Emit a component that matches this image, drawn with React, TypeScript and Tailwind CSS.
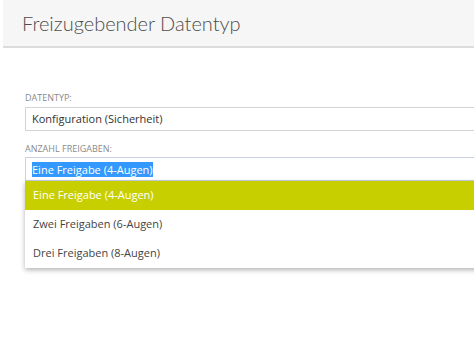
import React from "react";

const options = ["Eine Freigabe (4-Augen)", "Zwei Freigaben (6-Augen)", "Drei Freigaben (8-Augen)"];

export default function App() {
  return (
    <div className="relative h-[337px] w-[474px] overflow-hidden bg-white font-['Open_Sans',sans-serif]">
      <div className="ml-[3px] h-[48px] w-[600px] border-b-2 border-[#dcdcdc] bg-[#f6f6f6] pl-[19px] pt-[10px]">
        <h1 className="font-['Lato',sans-serif] text-[20px] font-light leading-[27px] text-[#4d4d4d]">Freizugebender Datentyp</h1>
      </div>

      <div className="w-[600px] pl-[25px] pt-[44px]">
        <div className="text-[9px] leading-[12px] uppercase text-[#8a8a8a]">Datentyp:</div>
        <div className="mt-[3px] flex h-[24px] items-center border border-[#d4d4d4] pl-[6px] text-[11px] text-[#333]">
          Konfiguration (Sicherheit)
        </div>

        <div className="mt-[12px] text-[9px] leading-[12px] uppercase text-[#8a8a8a]">Anzahl Freigaben:</div>
        <div className="relative mt-[2px]">
          <div className="flex h-[24px] items-center border border-[#c7d1e0] pl-[6px] text-[11px]">
            <span className="bg-[#3399ff] leading-[15px] text-white">Eine Freigabe (4-Augen)</span>
          </div>

          <div className="absolute left-0 top-[24px] w-full bg-white shadow-[0_2px_5px_rgba(0,0,0,0.3)]">
            {options.map((o, i) => (
              <div
                key={o}
                className={
                  i === 0
                    ? "flex h-[29px] items-center bg-[#c8cf00] pl-[8px] text-[11px] text-white"
                    : "flex h-[29px] items-center pl-[8px] text-[11px] text-[#444]"
                }
              >
                {o}
              </div>
            ))}
          </div>
        </div>
      </div>
    </div>
  );
}
